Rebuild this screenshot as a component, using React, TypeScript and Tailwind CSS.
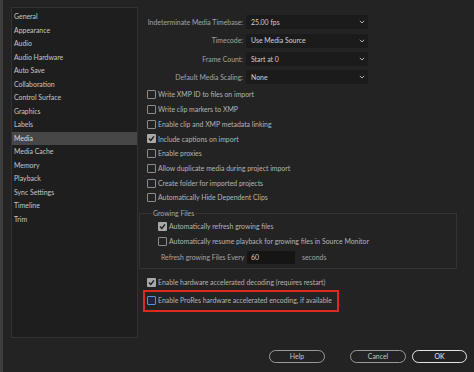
import React from "react";

const font = { fontFamily: "Lato, 'Open Sans', sans-serif" };

const sidebarItems = [
  "General",
  "Appearance",
  "Audio",
  "Audio Hardware",
  "Auto Save",
  "Collaboration",
  "Control Surface",
  "Graphics",
  "Labels",
  "Media",
  "Media Cache",
  "Memory",
  "Playback",
  "Sync Settings",
  "Timeline",
  "Trim",
];

function Check({ checked = false, focus = false }: { checked?: boolean; focus?: boolean }) {
  if (checked) {
    return (
      <span className="w-[9px] h-[9px] rounded-[1px] bg-[#a8a8a8] flex items-center justify-center shrink-0">
        <svg width="7" height="7" viewBox="0 0 7 7">
          <polyline points="1,3.6 2.8,5.4 6,1.4" fill="none" stroke="#1c1c1c" strokeWidth="1.4" />
        </svg>
      </span>
    );
  }
  if (focus) {
    return <span className="w-[9px] h-[9px] rounded-[1px] border border-[#4d95dc] bg-[#1d2540] shrink-0" />;
  }
  return <span className="w-[9px] h-[9px] rounded-[1px] border border-[#8c8c8c] shrink-0" />;
}

function CheckRow({ label, checked, focus }: { label: string; checked?: boolean; focus?: boolean }) {
  return (
    <div className="flex items-center gap-[2px] h-[14.7px]">
      <Check checked={checked} focus={focus} />
      <span className="text-[6.9px] text-[#b4b4b4] whitespace-nowrap leading-none">{label}</span>
    </div>
  );
}

function Select({ label, value }: { label: string; value: string }) {
  return (
    <div className="flex items-center h-[18.4px]">
      <span className="w-[97px] text-right text-[6.9px] text-[#a4a4a4] whitespace-nowrap leading-none pr-[1px]">
        {label}
      </span>
      <div className="ml-[2px] w-[122px] h-[14px] bg-[#1b1b1b] flex items-center justify-between pl-[5px] pr-[3px]">
        <span className="text-[6.9px] text-[#d0d0d0] leading-none">{value}</span>
        <svg width="6" height="4" viewBox="0 0 6 4">
          <polyline points="0.8,0.8 3,3 5.2,0.8" fill="none" stroke="#b0b0b0" strokeWidth="1" />
        </svg>
      </div>
    </div>
  );
}

function Button({ label, primary }: { label: string; primary?: boolean }) {
  return (
    <div
      className={`h-[13px] rounded-full flex items-center justify-center text-[6.9px] leading-none ${
        primary ? "w-[55px] border-[1.5px] border-[#e6e6e6] text-[#eeeeee]" : "w-[56px] border-[1.5px] border-[#9a9a9a] text-[#c4c4c4]"
      }`}
    >
      {label}
    </div>
  );
}

export default function App() {
  return (
    <div
      className="w-[474px] h-[372px] bg-[#232323] border-l-[3px] border-[#3d3d3d] flex flex-col overflow-hidden"
      style={font}
    >
      <div className="flex pt-[7px]">
        <div className="ml-[8px] w-[127px] h-[331px] bg-[#1e1e1e] border border-[#323232] pt-[2px]">
          {sidebarItems.map((it) => (
            <div
              key={it}
              className={`h-[13.5px] flex items-center pl-[2px] text-[6.9px] leading-none whitespace-nowrap ${
                it === "Media" ? "bg-[#474747] text-[#dcdcdc]" : "text-[#c6c6c6]"
              }`}
            >
              {it}
            </div>
          ))}
        </div>
        <div className="flex flex-col pl-[9px] pt-[6px] w-[330px]">
          <div className="flex flex-col">
            <Select label="Indeterminate Media Timebase:" value="25.00 fps" />
            <Select label="Timecode:" value="Use Media Source" />
            <Select label="Frame Count:" value="Start at 0" />
            <Select label="Default Media Scaling:" value="None" />
          </div>
          <div className="flex flex-col mt-[1px]">
            <CheckRow label="Write XMP ID to files on import" />
            <CheckRow label="Write clip markers to XMP" />
            <CheckRow label="Enable clip and XMP metadata linking" />
            <CheckRow label="Include captions on import" checked />
            <CheckRow label="Enable proxies" />
            <CheckRow label="Allow duplicate media during project import" />
            <CheckRow label="Create folder for imported projects" />
            <CheckRow label="Automatically Hide Dependent Clips" />
          </div>
          <fieldset className="-ml-[8px] mt-[5px] w-[318px] h-[59px] border border-[#333333] m-0 p-0">
            <legend className="text-[6.9px] text-[#a8a8a8] px-[1px] ml-[12px] leading-none">Growing Files</legend>
            <div className="flex flex-col mt-[2px] pl-[18px]">
              <CheckRow label="Automatically refresh growing files" checked />
              <CheckRow label="Automatically resume playback for growing files in Source Monitor" />
              <div className="flex items-center h-[16px] mt-[1px] pl-[3px]">
                <span className="w-[86px] text-[6.9px] text-[#a4a4a4] leading-none whitespace-nowrap">
                  Refresh growing Files Every
                </span>
                <div className="w-[48px] h-[13px] bg-[#151515] flex items-center pl-[4px]">
                  <span className="text-[6.9px] text-[#d0d0d0] leading-none">60</span>
                </div>
                <span className="ml-[7px] text-[6.9px] text-[#a4a4a4] leading-none">seconds</span>
              </div>
            </div>
          </fieldset>
          <div className="flex flex-col mt-[6px]">
            <CheckRow label="Enable hardware accelerated decoding (requires restart)" checked />
            <div className="-ml-[4px] w-[196px] h-[22px] border-2 border-[#dc2a1e] flex items-center pl-[2px]">
              <CheckRow label="Enable ProRes hardware accelerated encoding, if available" focus />
            </div>
          </div>
        </div>
      </div>
      <div className="flex justify-end items-center mt-[12px] pr-[7px] gap-[6px]">
        <Button label="Help" />
        <div className="w-[13px]" />
        <Button label="Cancel" />
        <Button label="OK" primary />
      </div>
    </div>
  );
}
